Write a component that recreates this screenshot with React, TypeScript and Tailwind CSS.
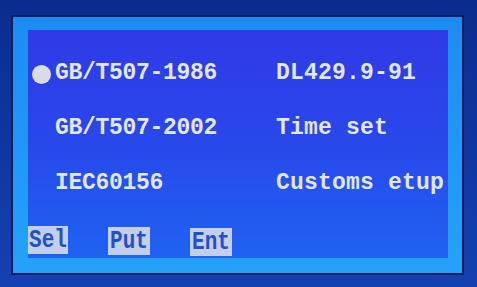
import React from "react";

const mono = { fontFamily: '"Liberation Mono", "DejaVu Sans Mono", monospace' };

function Row({ left, right, dot }: { left: string; right: string; dot?: boolean }) {
  return (
    <div className="grid grid-cols-[244px_1fr] h-[23px] items-center">
      <div className="flex items-center">
        <div className="w-[23px] h-[23px] flex items-center">
          {dot && <div className="w-[19px] h-[19px] rounded-full bg-[#d8dbea] mt-[2px]" />}
        </div>
        <span className="text-[23px] leading-[23px] font-bold text-[#e2e6f2] tracking-[-0.3px]">{left}</span>
      </div>
      <span className="text-[23px] leading-[23px] font-bold text-[#e2e6f2] tracking-[0.2px]">{right}</span>
    </div>
  );
}

function Key({ label, w }: { label: string; w: string }) {
  return (
    <div className={`${w} h-[28px] bg-[#c3cee8] flex items-center justify-center`}>
      <span className="text-[21px] leading-[21px] font-bold text-[#2150cc] scale-y-[1.2] inline-block whitespace-nowrap">{label}</span>
    </div>
  );
}

export default function App() {
  return (
    <div
      className="w-[477px] h-[287px] bg-linear-to-b from-[#0b2c8e] to-[#1541b0] pt-[15px] pl-[11px] pr-[13px] pb-[12px]"
      style={mono}
    >
      <div className="h-full border-2 border-[#0a1e66]">
        <div className="h-full bg-linear-to-b from-[#1d8cf2] to-[#25a2f8] pt-[13px] pl-[15px] pr-[14px] pb-[15px]">
          <div className="h-full bg-linear-to-b from-[#3039e6] via-[#2848ea] to-[#1f62f2] flex flex-col pt-[32px]">
            <div className="pl-[4px] flex flex-col gap-[32px]">
              <Row dot left="GB/T507-1986" right="DL429.9-91" />
              <Row left="GB/T507-2002" right="Time set" />
              <Row left="IEC60156" right="Customs etup" />
            </div>
            <div className="flex gap-[40px] mt-[31px] items-start">
              <Key label="Sel" w="w-[40px]" />
              <div className="mt-[1px]"><Key label="Put" w="w-[42px]" /></div>
              <div className="mt-[2px]"><Key label="Ent" w="w-[42px]" /></div>
            </div>
          </div>
        </div>
      </div>
    </div>
  );
}
